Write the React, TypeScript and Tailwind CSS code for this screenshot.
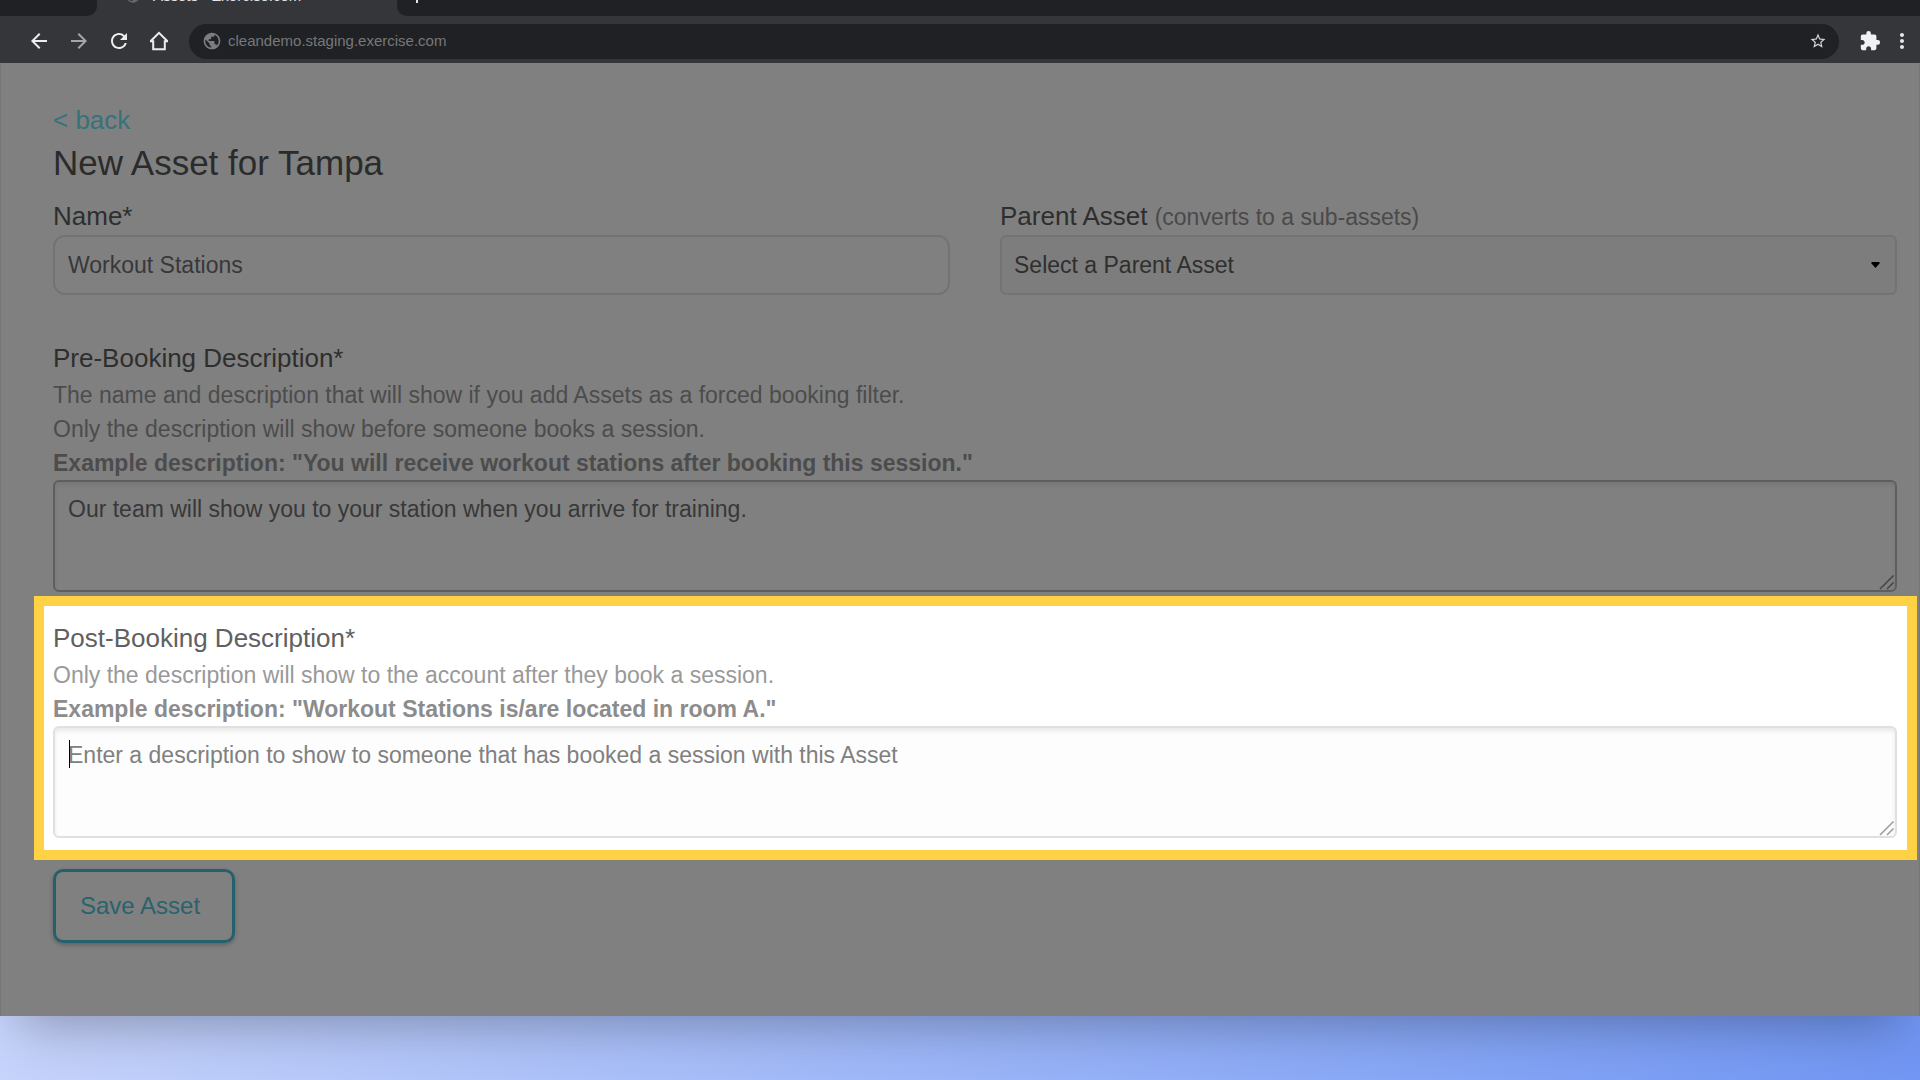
import type { ReactNode } from 'react';
import { MdArrowBack, MdArrowForward, MdExtension, MdMoreVert, MdPublic, MdRefresh, MdStarOutline } from 'react-icons/md';

function BrowserBar() {
  return (
    <header className="bg-[#35363a]">
      <div className="flex h-4 items-end overflow-hidden">
        <div className="h-4 w-[97px] shrink-0 rounded-br-[10px] bg-[#202124]" />
        <div className="flex h-8 w-[300px] shrink-0 items-start gap-3 pl-7">
          <MdPublic className="mt-1 size-4 shrink-0 text-[#63666a]" />
          <span className="text-[15px] leading-6 text-[#e4e5e8]">Assets - Exercise.com</span>
        </div>
        <div className="flex h-4 flex-1 items-end rounded-bl-[10px] bg-[#202124] pl-[14px]">
          <button type="button" aria-label="New tab" className="mb-[13px]">
            <svg className="size-3 text-[#e4e5e8]" viewBox="0 0 12 12" fill="none" stroke="currentColor" strokeWidth="2">
              <path d="M6 0v12M0 6h12" />
            </svg>
          </button>
        </div>
      </div>
      <nav className="flex h-[47px] items-center pt-[3px] pr-[6px] pl-[27px]" aria-label="Browser">
        <div className="flex items-center gap-4 pr-[18px] text-[#eceded]">
          <button type="button" aria-label="Back">
            <MdArrowBack className="size-6" />
          </button>
          <button type="button" aria-label="Forward" className="text-[#a5a6a8]">
            <MdArrowForward className="size-6" />
          </button>
          <button type="button" aria-label="Reload">
            <MdRefresh className="size-6" />
          </button>
          <button type="button" aria-label="Home">
            <svg className="size-6" viewBox="0 0 24 24" fill="none" stroke="currentColor" strokeWidth="2">
              <path d="M3.500 12.200 12 3.800l8.500 8.400M3 12.200H6.200V20.200H17.800V12.200H21" />
            </svg>
          </button>
        </div>
        <div className="flex h-[35px] flex-1 items-center rounded-full bg-[#202124] pr-3 pl-[13px]">
          <MdPublic className="size-5 text-[#7b7d80]" />
          <input
            type="text"
            aria-label="Address"
            defaultValue="cleandemo.staging.exercise.com"
            className="ml-[6px] flex-1 bg-transparent text-[15px] text-[#76787b] outline-none"
          />
          <button type="button" aria-label="Bookmark">
            <MdStarOutline className="size-[18px] text-[#d5d6d8]" />
          </button>
        </div>
        <button type="button" aria-label="Extensions" className="ml-5">
          <MdExtension className="size-[22px] text-[#f0f1f3]" />
        </button>
        <button type="button" aria-label="Menu" className="ml-[9px]">
          <MdMoreVert className="size-6 text-[#e6e7e9]" />
        </button>
      </nav>
    </header>
  );
}

function ResizeGrip({ className }: { className: string }) {
  return (
    <svg
      className={`pointer-events-none absolute right-[2px] bottom-[2px] size-4 ${className}`}
      viewBox="0 0 16 16"
      fill="none"
      stroke="currentColor"
      strokeWidth="1.6"
    >
      <path d="M1 15 14.500 1.500M8 15l6.500-6.500" />
    </svg>
  );
}

function HelpText({ className, children }: { className: string; children: ReactNode }) {
  return <p className={`mt-1 text-[23px] leading-[34px] ${className}`}>{children}</p>;
}

export default function App() {
  return (
    <div className="flex min-h-screen flex-col overflow-hidden bg-linear-to-r from-[#c6d3fb] to-[#7196f3] font-['Liberation_Sans',Arial,sans-serif]">
      <div className="mb-16 flex flex-1 flex-col bg-[#808080] shadow-[0_28px_50px_-20px_rgba(0,0,0,0.3)]">
        <BrowserBar />
        <main className="flex-1 border-x border-[#77777a] pt-[41px] pr-[2px] pl-[33px]">
          <form>
            <div className="pr-5 pl-[19px]">
              <a href="#assets" className="text-[26px] leading-8 text-[#36727c]">
                &lt; back
              </a>
              <h1 className="mt-[7px] text-[35px] leading-10 text-[#2b2b2b]">New Asset for Tampa</h1>
              <div className="mt-[17px] grid grid-cols-2 gap-[50px]">
                <div>
                  <label htmlFor="name" className="block h-8 text-[26px] leading-8 text-[#2e2e2e]">
                    Name*
                  </label>
                  <input
                    id="name"
                    type="text"
                    defaultValue="Workout Stations"
                    className="mt-[3px] block h-[60px] w-full rounded-xl border-2 border-[#737373] px-[13px] text-[23px] text-[#383838] outline-none"
                  />
                </div>
                <div>
                  <label htmlFor="parent" className="block h-8 text-[26px] leading-8 text-[#2e2e2e]">
                    Parent Asset <small className="text-[23px] text-[#4a4a4a]">(converts to a sub-assets)</small>
                  </label>
                  <div className="relative mt-[3px]">
                    <select
                      id="parent"
                      className="block h-[60px] w-full appearance-none rounded-md border-2 border-[#737373] bg-[#7d7d7d] px-3 text-[23px] text-[#2f2f2f] outline-none"
                    >
                      <option>Select a Parent Asset</option>
                    </select>
                    <svg className="pointer-events-none absolute top-[27px] right-[17px] h-[6px] w-[9px]" viewBox="0 0 9 6">
                      <path d="M.5 0h8v1.500L4.500 6 .5 1.500z" />
                    </svg>
                  </div>
                </div>
              </div>

              <label htmlFor="pre" className="mt-[47px] block text-[26px] leading-8 text-[#2e2e2e]">
                Pre-Booking Description*
              </label>
              <HelpText className="text-[#4c4c4c]">
                The name and description that will show if you add Assets as a forced booking filter.
                <br />
                Only the description will show before someone books a session.
                <br />
                <strong>Example description: "You will receive workout stations after booking this session."</strong>
              </HelpText>
              <div className="relative">
                <textarea
                  id="pre"
                  defaultValue="Our team will show you to your station when you arrive for training."
                  className="block h-28 w-full resize-none rounded-md border-2 border-[#5e5e5e] px-[13px] py-[10px] text-[23px] leading-[34px] text-[#383838] shadow-[inset_0_3px_4px_rgba(0,0,0,0.08)] outline-none"
                />
                <ResizeGrip className="text-[#474747]" />
              </div>
            </div>

            <div className="mt-1 border-[10px] border-[#ffd145] bg-white pt-4 pr-[10px] pb-3 pl-[9px]">
              <label htmlFor="post" className="block text-[26px] leading-8 text-[#606060]">
                Post-Booking Description*
              </label>
              <HelpText className="text-[#999]">
                Only the description will show to the account after they book a session.
                <br />
                <strong className="text-[#8c8c8c]">
                  Example description: "Workout Stations is/are located in room A."
                </strong>
              </HelpText>
              <div className="relative">
                <textarea
                  id="post"
                  placeholder="Enter a description to show to someone that has booked a session with this Asset"
                  className="block h-28 w-full resize-none rounded-md border-2 border-[#e0e0e0] bg-[#fdfdfd] px-[13px] py-[10px] text-[23px] leading-[34px] text-[#606060] shadow-[inset_0_3px_4px_rgba(0,0,0,0.08)] outline-none placeholder:text-[#808080]"
                />
                {/* text cursor */}
                <span className="absolute top-[14px] left-4 h-7 w-px bg-black" />
                <ResizeGrip className="text-[#a0a0a0]" />
              </div>
            </div>

            <div className="pt-[9px] pl-[19px]">
              <button
                type="submit"
                className="h-[74px] rounded-[10px] border-[3px] border-[#25616c] pr-8 pl-6 text-[24px] text-[#28636e] shadow-[0_2px_4px_rgba(0,0,0,0.25)]"
              >
                Save Asset
              </button>
            </div>
          </form>
        </main>
      </div>
    </div>
  );
}
